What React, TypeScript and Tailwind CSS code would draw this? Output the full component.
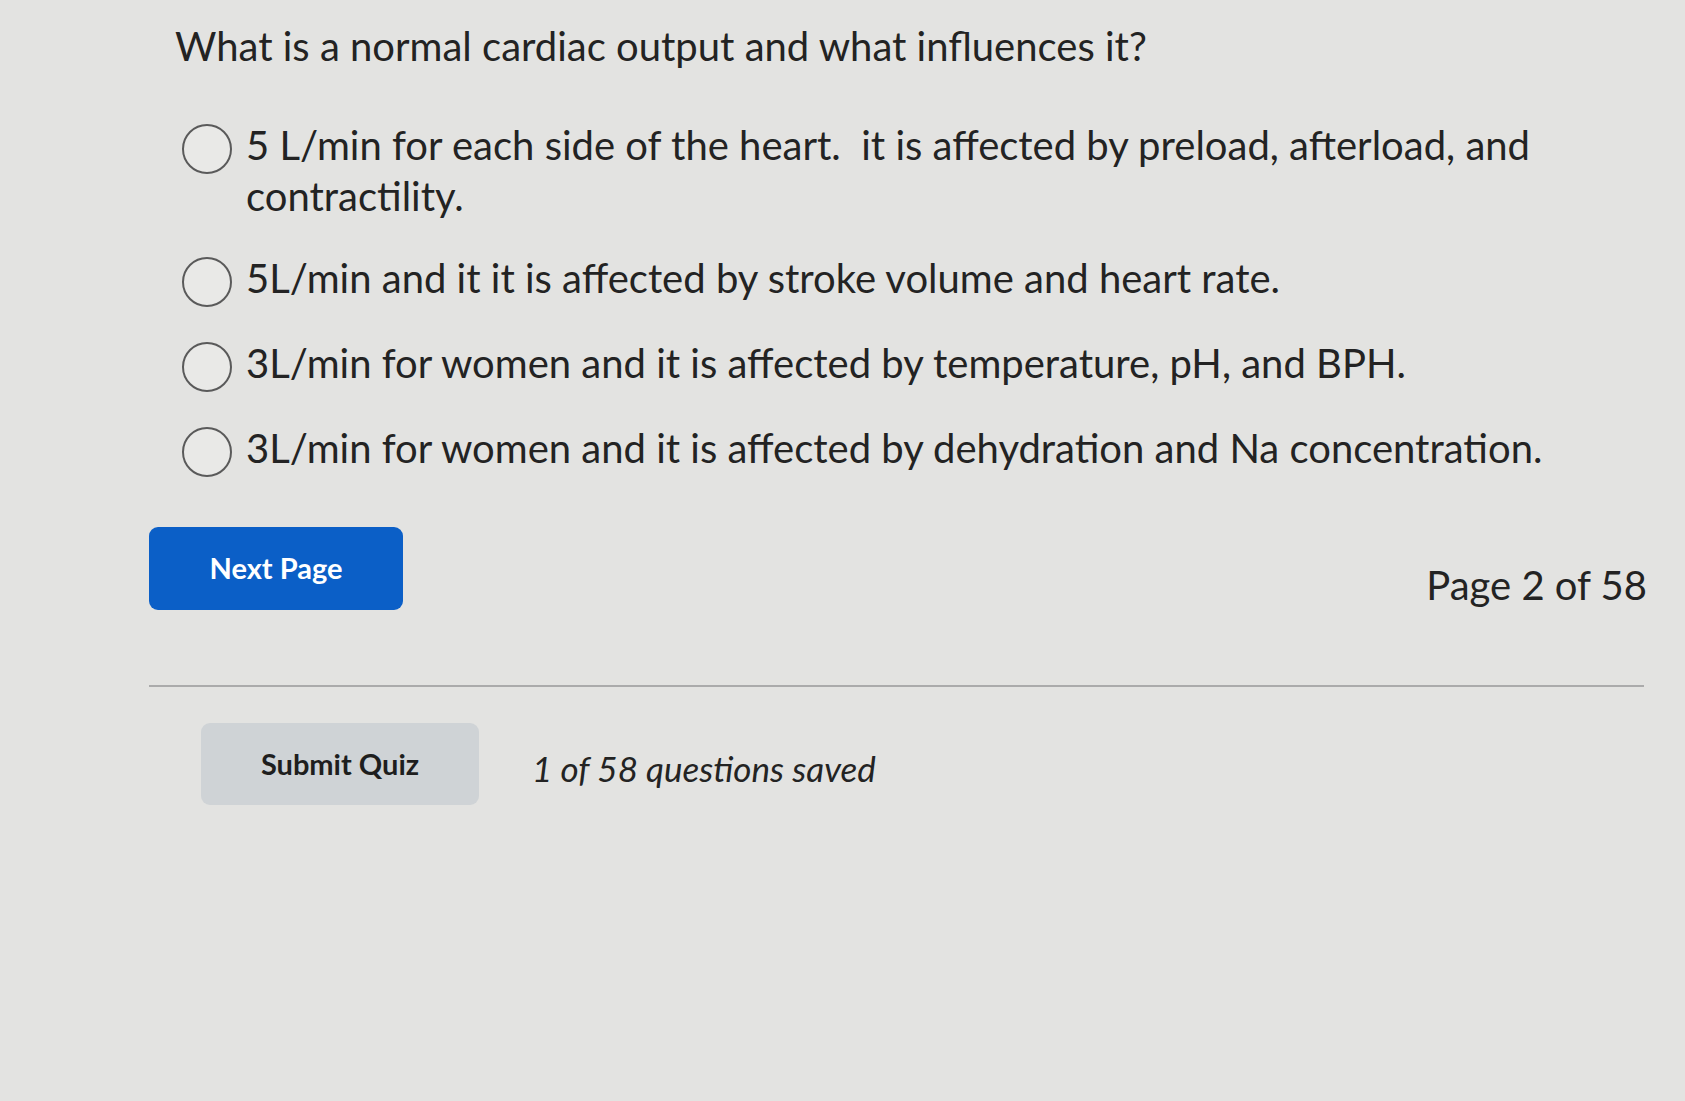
import React from "react";

// Quiz page: one question with four radio options, paging and submit controls
const options = [
  "5 L/min for each side of the heart.\u00a0 it is affected by preload, afterload, and contractility.",
  "5L/min and it it is affected by stroke volume and heart rate.",
  "3L/min for women and it is affected by temperature, pH, and BPH.",
  "3L/min for women and it is affected by dehydration and Na concentration.",
];

function Radio() {
  return (
    <span className="mt-[4px] box-border h-[50px] w-[50px] shrink-0 rounded-full border-2 border-[#5a5a5a] bg-[#e9e9e7]" />
  );
}

export default function App() {
  return (
    <div
      className="min-h-[1101px] w-full bg-[#e3e3e1] text-[#232323]"
      style={{ fontFamily: "Lato, 'Noto Sans', sans-serif" }}
    >
      <div className="pl-[175px] pt-[22px]">
        <h1 className="text-[40px] font-normal leading-[1.2]">
          What is a normal cardiac output and what influences it?
        </h1>
      </div>

      {/* answer options */}
      <div className="mt-[50px] flex flex-col gap-[31px] pl-[182px] pr-[100px]">
        {options.map((text) => (
          <label key={text} className="flex items-start gap-[14px]">
            <Radio />
            <span className="text-[40px] leading-[51px]">{text}</span>
          </label>
        ))}
      </div>

      {/* paging row */}
      <div className="mt-[44px] flex items-center justify-between pl-[149px] pr-[38px]">
        <button className="flex h-[83px] w-[254px] items-center justify-center rounded-[9px] bg-[#0b5fc7] text-[29px] font-bold text-white">
          Next Page
        </button>
        <span className="mt-[34px] text-[40px]">Page 2 of 58</span>
      </div>

      <div className="ml-[149px] mr-[41px] mt-[70px] h-[2px] bg-[#ababab]" />

      {/* submit row */}
      <div className="mt-[36px] flex items-center pl-[201px]">
        <button className="flex h-[82px] w-[278px] items-center justify-center rounded-[9px] bg-[#cfd3d6] text-[29px] font-bold text-[#1e1e1e]">
          Submit Quiz
        </button>
        <span className="ml-[53px] mt-[8px] text-[35px] italic">1 of 58 questions saved</span>
      </div>
    </div>
  );
}
